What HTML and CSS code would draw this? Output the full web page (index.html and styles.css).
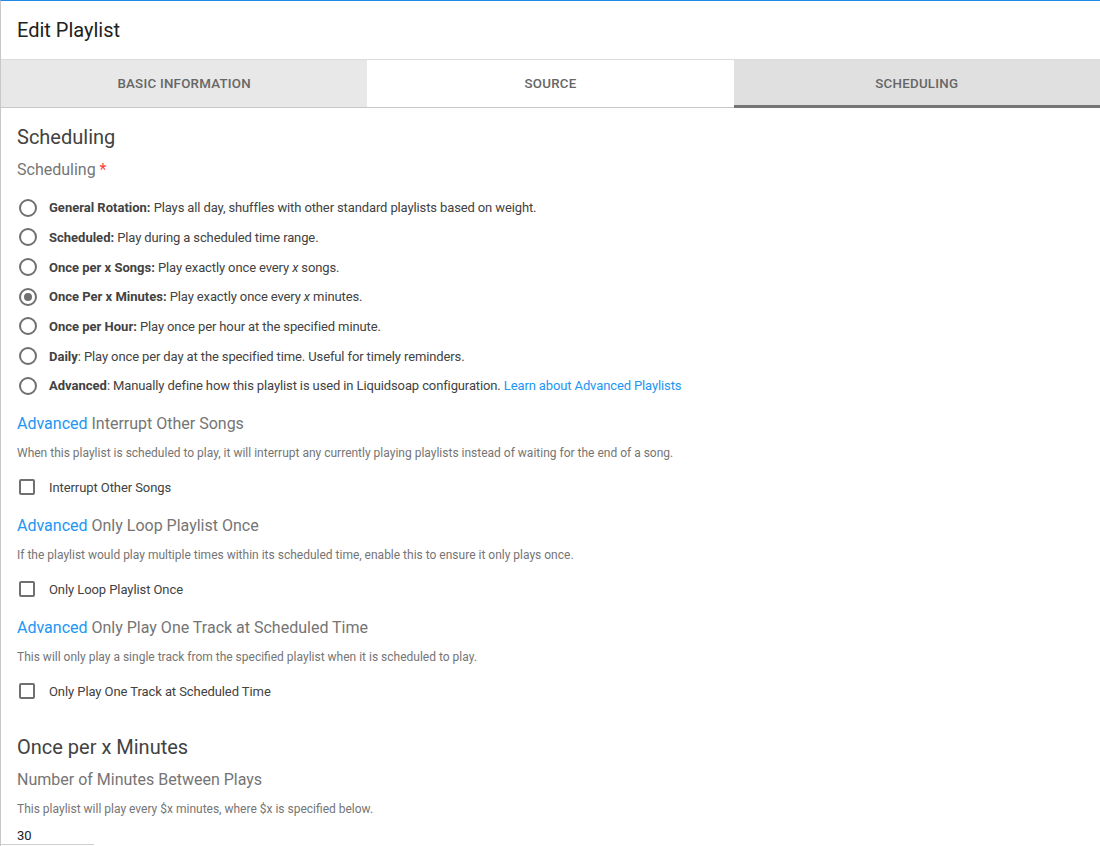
FILE: index.html
```html
<!DOCTYPE html>
<html>
<head>
<meta charset="utf-8">
<link rel="stylesheet" href="styles.css">
</head>
<body>
<div class="modal">
  <div class="header"><h1 class="title">Edit Playlist</h1></div>
  <div class="tabs">
    <div class="tab tab-basic">Basic Information</div>
    <div class="tab tab-source">Source</div>
    <div class="tab tab-sched">Scheduling</div>
  </div>
  <div class="content">
    <h2 class="section-title">Scheduling</h2>
    <div class="field-label">Scheduling <span class="req">*</span></div>
    <div class="radios">
      <div class="radio-row"><span class="radio"></span><span class="rtext"><b>General Rotation:</b> Plays all day, shuffles with other standard playlists based on weight.</span></div>
      <div class="radio-row"><span class="radio"></span><span class="rtext"><b>Scheduled:</b> Play during a scheduled time range.</span></div>
      <div class="radio-row"><span class="radio"></span><span class="rtext"><b>Once per x Songs:</b> Play exactly once every <i>x</i> songs.</span></div>
      <div class="radio-row"><span class="radio checked"></span><span class="rtext"><b>Once Per x Minutes:</b> Play exactly once every <i>x</i> minutes.</span></div>
      <div class="radio-row"><span class="radio"></span><span class="rtext"><b>Once per Hour:</b> Play once per hour at the specified minute.</span></div>
      <div class="radio-row"><span class="radio"></span><span class="rtext"><b>Daily</b>: Play once per day at the specified time. Useful for timely reminders.</span></div>
      <div class="radio-row"><span class="radio"></span><span class="rtext"><b>Advanced</b>: Manually define how this playlist is used in Liquidsoap configuration. <a class="link">Learn about Advanced Playlists</a></span></div>
    </div>

    <div class="adv-block first">
      <div class="adv-title"><span class="adv">Advanced</span> Interrupt Other Songs</div>
      <div class="desc">When this playlist is scheduled to play, it will interrupt any currently playing playlists instead of waiting for the end of a song.</div>
      <div class="check-row"><span class="checkbox"></span><span class="ctext">Interrupt Other Songs</span></div>
    </div>
    <div class="adv-block">
      <div class="adv-title"><span class="adv">Advanced</span> Only Loop Playlist Once</div>
      <div class="desc">If the playlist would play multiple times within its scheduled time, enable this to ensure it only plays once.</div>
      <div class="check-row"><span class="checkbox"></span><span class="ctext">Only Loop Playlist Once</span></div>
    </div>
    <div class="adv-block">
      <div class="adv-title"><span class="adv">Advanced</span> Only Play One Track at Scheduled Time</div>
      <div class="desc">This will only play a single track from the specified playlist when it is scheduled to play.</div>
      <div class="check-row"><span class="checkbox"></span><span class="ctext">Only Play One Track at Scheduled Time</span></div>
    </div>

    <h2 class="section-title second">Once per x Minutes</h2>
    <div class="field-label second">Number of Minutes Between Plays</div>
    <div class="desc last">This playlist will play every $x minutes, where $x is specified below.</div>
    <div class="input">30</div>
  </div>
</div>
</body>
</html>
```

FILE: styles.css
```css
html, body {
  margin: 0;
  padding: 0;
  background: #fff;
}
body {
  font-family: Roboto, "Noto Sans", "Liberation Sans", sans-serif;
  color: #424242;
  overflow: hidden;
}
.modal {
  border-top: 1px solid #1e88e5;
  border-left: 1px solid #c8c8c8;
  height: 845px;
  overflow: hidden;
}
.header {
  height: 58px;
  border-bottom: 1px solid #dcdcdc;
  display: flex;
  align-items: center;
  padding-left: 16px;
}
.title {
  margin: 0;
  font-size: 20px;
  font-weight: 400;
  color: #212121;
}
.tabs {
  display: flex;
  height: 47px;
  border-bottom: 1px solid #c8c8c8;
}
.tab {
  flex: 1;
  display: flex;
  align-items: center;
  justify-content: center;
  text-transform: uppercase;
  font-size: 13.3px;
  font-weight: 500;
  letter-spacing: 0.25px;
  color: #666;
}
.tab-basic { background: #e8e8e8; }
.tab-source { background: #fff; }
.tab-sched {
  background: #e0e0e0;
  box-shadow: inset 0 -2px 0 #757575;
  margin-bottom: -1px;
  border-bottom: 1px solid #757575;
}
.content {
  padding-left: 16px;
}
.section-title {
  margin: 17px 0 0;
  font-size: 20px;
  line-height: 24px;
  font-weight: 400;
  color: #424242;
}
.section-title.second {
  margin-top: 32px;
}
.field-label {
  margin-top: 11px;
  font-size: 16px;
  line-height: 20px;
  color: #757575;
}
.field-label.second { margin-top: 11px; }
.req { color: #f44336; }
.radios {
  margin-top: 13px;
}
.radio-row {
  height: 29.65px;
  display: flex;
  align-items: center;
  gap: 12px;
  padding-left: 2px;
}
.radio {
  width: 14px;
  height: 14px;
  border: 2px solid #707070;
  border-radius: 50%;
  flex: none;
  display: flex;
  align-items: center;
  justify-content: center;
}
.radio.checked::after {
  content: "";
  width: 8px;
  height: 8px;
  border-radius: 50%;
  background: #707070;
}
.rtext {
  font-size: 13px;
  letter-spacing: -0.12px;
  color: #424242;
}
.rtext b { font-weight: 700; color: #424242; letter-spacing: 0; }
.link { color: #2196f3; text-decoration: none; }
.adv-block {
  margin-top: 17px;
}
.adv-block.first { margin-top: 14px; }
.adv-title {
  font-size: 16px;
  line-height: 20px;
  color: #757575;
}
.adv { color: #2196f3; }
.desc {
  margin-top: 11px;
  font-size: 12px;
  line-height: 16px;
  color: #757575;
}
.desc.last { margin-top: 11px; }
.check-row {
  margin-top: 14px;
  height: 24px;
  display: flex;
  align-items: center;
  gap: 14px;
  padding-left: 2px;
}
.checkbox {
  width: 12px;
  height: 12px;
  border: 2px solid #707070;
  border-radius: 2px;
  flex: none;
}
.ctext {
  font-size: 13px;
  letter-spacing: -0.08px;
  color: #424242;
}
.input {
  margin-top: 10px;
  margin-left: -16px;
  padding-left: 16px;
  width: 77px;
  font-size: 13px;
  line-height: 17px;
  color: #212121;
  border-bottom: 1px solid #cfcfcf;
}
```
